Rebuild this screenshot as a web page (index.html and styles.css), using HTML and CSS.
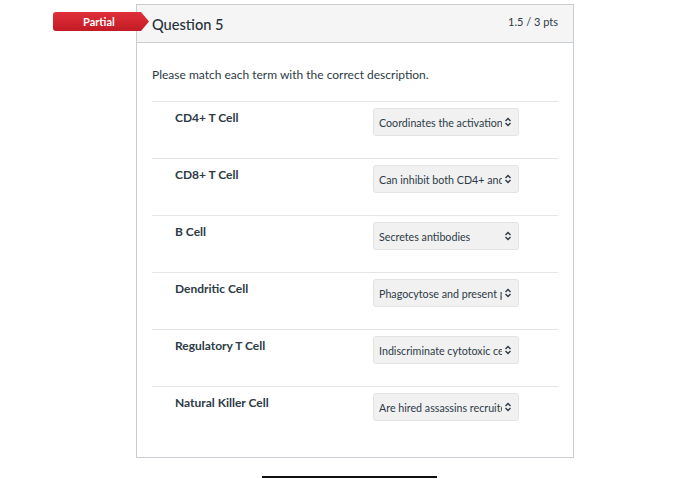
FILE: index.html
```html
<!DOCTYPE html>
<html>
<head>
<meta charset="utf-8">
<link rel="stylesheet" href="styles.css">
</head>
<body>
<div class="page">
  <div class="card">
    <div class="badge">Partial</div>
    <div class="card-head">
      <div class="title">Question 5</div>
      <div class="pts">1.5 / 3 pts</div>
    </div>
    <div class="card-body">
      <p class="prompt">Please match each term with the correct description.</p>
      <div class="rows">
        <div class="row"><div class="term">CD4+ T Cell</div><div class="sel"><span class="sel-text">Coordinates the activation</span><svg class="arr" viewBox="0 0 8 10" width="8" height="10"><path d="M1.5 4 L4 1.5 L6.5 4 M1.5 6 L4 8.5 L6.5 6" fill="none" stroke="#2d3b45" stroke-width="1.4"/></svg></div></div>
        <div class="row"><div class="term">CD8+ T Cell</div><div class="sel"><span class="sel-text">Can inhibit both CD4+ and CD8+</span><svg class="arr" viewBox="0 0 8 10" width="8" height="10"><path d="M1.5 4 L4 1.5 L6.5 4 M1.5 6 L4 8.5 L6.5 6" fill="none" stroke="#2d3b45" stroke-width="1.4"/></svg></div></div>
        <div class="row"><div class="term">B Cell</div><div class="sel"><span class="sel-text">Secretes antibodies</span><svg class="arr" viewBox="0 0 8 10" width="8" height="10"><path d="M1.5 4 L4 1.5 L6.5 4 M1.5 6 L4 8.5 L6.5 6" fill="none" stroke="#2d3b45" stroke-width="1.4"/></svg></div></div>
        <div class="row"><div class="term">Dendritic Cell</div><div class="sel"><span class="sel-text">Phagocytose and present peptides</span><svg class="arr" viewBox="0 0 8 10" width="8" height="10"><path d="M1.5 4 L4 1.5 L6.5 4 M1.5 6 L4 8.5 L6.5 6" fill="none" stroke="#2d3b45" stroke-width="1.4"/></svg></div></div>
        <div class="row"><div class="term">Regulatory T Cell</div><div class="sel"><span class="sel-text">Indiscriminate cytotoxic cells</span><svg class="arr" viewBox="0 0 8 10" width="8" height="10"><path d="M1.5 4 L4 1.5 L6.5 4 M1.5 6 L4 8.5 L6.5 6" fill="none" stroke="#2d3b45" stroke-width="1.4"/></svg></div></div>
        <div class="row"><div class="term">Natural Killer Cell</div><div class="sel"><span class="sel-text">Are hired assassins recruited</span><svg class="arr" viewBox="0 0 8 10" width="8" height="10"><path d="M1.5 4 L4 1.5 L6.5 4 M1.5 6 L4 8.5 L6.5 6" fill="none" stroke="#2d3b45" stroke-width="1.4"/></svg></div></div>
      </div>
    </div>
  </div>
  <div class="bottom-line"></div>
</div>
</body>
</html>
```
FILE: styles.css
```css
* { box-sizing: border-box; }
html, body { margin: 0; padding: 0; background: #fff; }
body { font-family: Lato, "Open Sans", sans-serif; color: #2d3b45; }
.page { width: 700px; height: 479px; padding-top: 4px; position: relative; }
.card {
  position: relative;
  margin-left: 136px;
  width: 438px;
  height: 454px;
  border: 1px solid #c7cdd1;
}
.badge {
  position: absolute;
  left: -84px;
  top: 7px;
  width: 96px;
  height: 19px;
  background: linear-gradient(#e0303a, #c21b25);
  color: #fff;
  font-size: 11px;
  font-weight: 700;
  line-height: 19px;
  padding-left: 30px;
  border-radius: 3px 0 0 3px;
  clip-path: polygon(0 0, 88px 0, 96px 50%, 88px 100%, 0 100%);
}
.card-head {
  height: 38px;
  background: #f5f5f5;
  border-bottom: 1px solid #c7cdd1;
  display: flex;
  justify-content: space-between;
  padding: 0 15px 0 15px;
}
.title { font-size: 14.6px; font-weight: 500; margin-top: 11px; color: #26323a; }
.pts { font-size: 11px; margin-top: 10px; color: #2d3b45; }
.card-body { padding: 24px 15px 0 15px; }
.prompt { margin: 0; font-size: 12px; line-height: 16px; height: 34px; }
.rows { display: flex; flex-direction: column; }
.row {
  height: 57px;
  border-top: 1px solid #e3e5e7;
  display: flex;
  align-items: flex-start;
}
.term {
  width: 221px;
  padding-left: 23px;
  padding-top: 9px;
  font-size: 12px;
  font-weight: 700;
  line-height: 14px;
}
.sel {
  margin-top: 6px;
  width: 146px;
  height: 28px;
  background: #f1f1f2;
  border: 1px solid #e1e3e5;
  border-radius: 3px;
  display: flex;
  align-items: center;
  padding: 0 6px 0 5px;
  font-size: 10.7px;
}
.sel-text { flex: 0 0 123px; white-space: nowrap; overflow: hidden; }
.arr { margin-left: auto; flex: 0 0 8px; }
.bottom-line {
  width: 175px;
  height: 2px;
  background: #111;
  margin: 18px 0 0 262px;
}
```
